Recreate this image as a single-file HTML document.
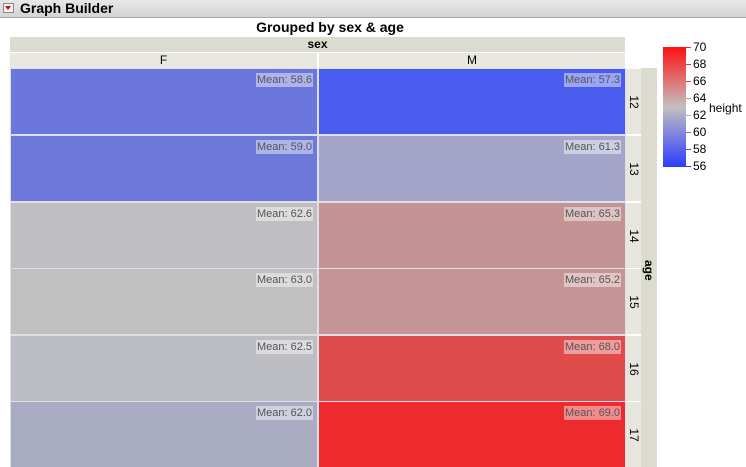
<!DOCTYPE html>
<html><head><style>
body{margin:0;width:746px;height:467px;background:#fff;font-family:"Liberation Sans",sans-serif;position:relative;overflow:hidden}
.a{position:absolute}
.hdr{left:0;top:0;width:746px;height:17px;background:linear-gradient(#e8e8e8,#d4d4d4);border-bottom:1px solid #a8a8a8}
.c{position:absolute;width:306px;height:65px}
.m{position:absolute;right:4px;top:4px;background:rgba(255,255,255,.45);color:#555;font-size:11px;line-height:14px;padding:0 1px}
.r{position:absolute;left:626px;width:15px;height:65px;background:#e6e6df;font-size:12px;color:#000}
.r span{position:absolute;left:50%;top:50%;transform:translate(-50%,-50%) rotate(90deg)}
.tk{position:absolute;left:686px;width:5px;height:1px;background:#d33}
.lb{position:absolute;left:693px;font-size:12px;color:#000;line-height:12px}
</style></head><body>
<div class="a hdr"></div>
<div class="a" style="left:3px;top:3px;width:11px;height:10px;background:#f4f4f4;border:1px solid #888;box-sizing:border-box"></div>
<div class="a" style="left:5px;top:6px;width:0;height:0;border-left:3.5px solid transparent;border-right:3.5px solid transparent;border-top:4px solid #d00"></div>
<div class="a" style="left:20px;top:0px;font-size:14px;font-weight:bold;line-height:17px">Graph Builder</div>
<div class="a" style="left:0;width:660px;top:19px;text-align:center;font-size:14px;font-weight:bold">Grouped by sex &amp; age</div>
<div class="a" style="left:10px;top:37px;width:615px;height:15px;background:#dcdbd0;font-size:12px;font-weight:bold;text-align:center;line-height:15px">sex</div>
<div class="a" style="left:10px;top:53px;width:307px;height:15px;background:#e8e8e0;font-size:12px;text-align:center;line-height:15px">F</div>
<div class="a" style="left:319px;top:53px;width:306px;height:15px;background:#e8e8e0;font-size:12px;text-align:center;line-height:15px">M</div>
<div class="a" style="left:10px;top:68px;width:616px;height:399px;background:#dedfe8"></div>
<div class="a" style="left:641px;top:68px;width:16px;height:399px;background:#dcdbd0"></div>
<div class="a" style="left:643px;top:260px;font-size:12px;font-weight:bold;transform:rotate(90deg);transform-origin:left top;left:656px">age</div>

<div class="c" style="left:11px;top:69px;background:#6b77dc"><div class="m">Mean: 58.6</div></div>
<div class="c" style="left:319px;top:69px;background:#4a5ced"><div class="m">Mean: 57.3</div></div>
<div class="c" style="left:11px;top:136px;background:#6d79d8"><div class="m">Mean: 59.0</div></div>
<div class="c" style="left:319px;top:136px;background:#a3a6c8"><div class="m">Mean: 61.3</div></div>
<div class="c" style="left:11px;top:203px;background:#bfbfc2"><div class="m">Mean: 62.6</div></div>
<div class="c" style="left:319px;top:203px;background:#c49394"><div class="m">Mean: 65.3</div></div>
<div class="c" style="left:11px;top:269px;background:#c0c0c1"><div class="m">Mean: 63.0</div></div>
<div class="c" style="left:319px;top:269px;background:#c59596"><div class="m">Mean: 65.2</div></div>
<div class="c" style="left:11px;top:336px;background:#bdbdc4"><div class="m">Mean: 62.5</div></div>
<div class="c" style="left:319px;top:336px;background:#e04b4c"><div class="m">Mean: 68.0</div></div>
<div class="c" style="left:11px;top:402px;background:#aaacc3"><div class="m">Mean: 62.0</div></div>
<div class="c" style="left:319px;top:402px;background:#ed2a2e"><div class="m">Mean: 69.0</div></div>

<div class="r" style="top:69px"><span>12</span></div>
<div class="r" style="top:136px"><span>13</span></div>
<div class="r" style="top:203px"><span>14</span></div>
<div class="r" style="top:269px"><span>15</span></div>
<div class="r" style="top:336px"><span>16</span></div>
<div class="r" style="top:402px"><span>17</span></div>

<div class="a" style="left:663px;top:47px;width:23px;height:120px;background:linear-gradient(#ff1010,#c4c0c0 50%,#2b3cff)"></div>
<div class="tk" style="top:47px"></div><div class="lb" style="top:41px">70</div>
<div class="tk" style="top:64px"></div><div class="lb" style="top:58px">68</div>
<div class="tk" style="top:81px"></div><div class="lb" style="top:75px">66</div>
<div class="tk" style="top:98px;background:#c99"></div><div class="lb" style="top:92px">64</div>
<div class="tk" style="top:115px;background:#aac"></div><div class="lb" style="top:109px">62</div>
<div class="tk" style="top:132px;background:#77c"></div><div class="lb" style="top:126px">60</div>
<div class="tk" style="top:149px;background:#55d"></div><div class="lb" style="top:143px">58</div>
<div class="tk" style="top:166px;background:#33e"></div><div class="lb" style="top:160px">56</div>
<div class="lb" style="left:709px;top:102px">height</div>
</body></html>
